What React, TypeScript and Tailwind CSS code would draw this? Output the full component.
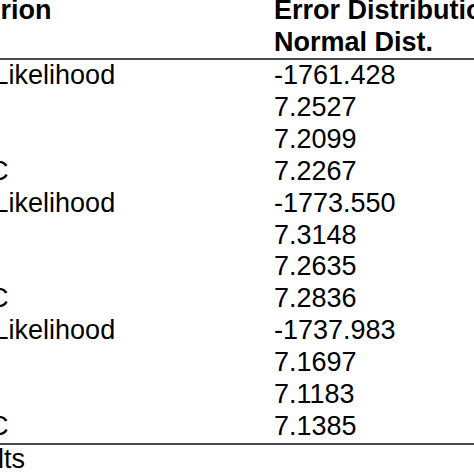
import React from "react";

type Row = { criterion: string; value: string };

const rows: Row[] = [
  { criterion: "Log Likelihood", value: "-1761.428" },
  { criterion: "AIC", value: "7.2527" },
  { criterion: "BIC", value: "7.2099" },
  { criterion: "HQIC", value: "7.2267" },
  { criterion: "Log Likelihood", value: "-1773.550" },
  { criterion: "AIC", value: "7.3148" },
  { criterion: "BIC", value: "7.2635" },
  { criterion: "HQIC", value: "7.2836" },
  { criterion: "Log Likelihood", value: "-1737.983" },
  { criterion: "AIC", value: "7.1697" },
  { criterion: "BIC", value: "7.1183" },
  { criterion: "HQIC", value: "7.1385" },
];

const App: React.FC = () => {
  return (
    <div className="w-[474px] h-[474px] overflow-hidden bg-white text-black font-['Liberation_Sans',Arial,sans-serif] text-[27px]">
      <div className="ml-[-59px] mt-[-6px] w-[700px]">
        {/* header */}
        <div className="flex font-bold leading-[32px] border-b-2 border-[#4a4a4a]">
          <div className="w-[333px] shrink-0 pl-[-2px] ml-[-2px]">Criterion</div>
          <div className="whitespace-nowrap ml-[2px]">
            <div>Error Distribution</div>
            <div>Normal Dist.</div>
          </div>
        </div>

        {/* body */}
        <div className="border-b-2 border-[#4a4a4a]">
          {rows.map((row, i) => (
            <div key={i} className="flex leading-[31.9px]">
              <div className="w-[333px] shrink-0 whitespace-nowrap">
                {row.criterion}
              </div>
              <div className="whitespace-nowrap">{row.value}</div>
            </div>
          ))}
        </div>

        <div className="leading-[28px] ml-[-6px]">Results</div>
      </div>
    </div>
  );
};

export default App;
